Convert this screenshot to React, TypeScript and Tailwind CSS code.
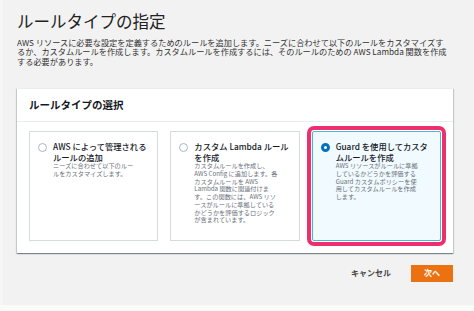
import React from "react";

type CardProps = {
  title: string[];
  desc: string[];
  selected?: boolean;
};

function Card({ title, desc, selected }: CardProps) {
  return (
    <div
      className={
        selected
          ? "flex gap-[6px] pl-[8px] pt-[9px] border border-[#44b9d6] bg-[#f1faff] rounded-[2px] outline-4 outline-solid outline-[#ee2f6d] outline-offset-[1px]"
          : "flex gap-[6px] pl-[8px] pt-[9px] border border-[#d5dbdb] bg-white"
      }
    >
      <div className="pt-[2px] shrink-0">
        {selected ? (
          <div className="w-[9px] h-[9px] rounded-full border-[3px] border-[#0073bb] bg-white" />
        ) : (
          <div className="w-[9px] h-[9px] rounded-full border border-[#aab7b8] bg-white" />
        )}
      </div>
      <div className="flex flex-col">
        <div className="text-[8.3px] leading-[10.7px] font-medium text-[#16191f]">
          {title.map((t) => (
            <div key={t} className="whitespace-nowrap">
              {t}
            </div>
          ))}
        </div>
        <div className="text-[6.2px] leading-[7.7px] text-[#687078]">
          {desc.map((t) => (
            <div key={t} className="whitespace-nowrap">
              {t}
            </div>
          ))}
        </div>
      </div>
    </div>
  );
}

export default function App() {
  return (
    <div className="w-[474px] h-[311px] overflow-hidden flex flex-col bg-[#fafafa] font-['Noto_Sans_CJK_JP','Open_Sans',sans-serif]">
      <div className="h-[305px] bg-[#f2f2f2] border-l-[3px] border-l-[#f6f6f6] pl-[14px] pt-[10px] flex flex-col">
        <h1 className="text-[16.5px] leading-[22px] font-normal text-[#222] whitespace-nowrap">
          ルールタイプの指定
        </h1>
        <div className="mt-[6px] text-[8.2px] leading-[9.3px] text-[#333]">
          <div className="whitespace-nowrap">
            AWS リソースに必要な設定を定義するためのルールを追加します。ニーズに合わせて以下のルールをカスタマイズす
          </div>
          <div className="whitespace-nowrap">
            るか、カスタムルールを作成します。カスタムルールを作成するには、そのルールのための AWS Lambda 関数を作成
          </div>
          <div className="whitespace-nowrap">する必要があります。</div>
        </div>

        <div className="mt-[22px] w-[436px] bg-white border-t border-t-[#eaeded] shadow-[0_1px_1px_0_rgba(0,28,36,0.3),1px_1px_1px_0_rgba(0,28,36,0.15),-1px_1px_1px_0_rgba(0,28,36,0.15)]">
          <div className="h-[33px] flex items-center px-[12px] border-b border-[#eaeded]">
            <span className="text-[10.5px] font-bold text-[#16191f]">ルールタイプの選択</span>
          </div>
          <div className="grid grid-cols-3 gap-[12px] px-[12px] pt-[9px] pb-[12px]">
            <div className="h-[110px] flex flex-col [&>div]:flex-1">
              <Card
                title={["AWS によって管理される", "ルールの追加"]}
                desc={["ニーズに合わせて以下のルー", "ルをカスタマイズします。"]}
              />
            </div>
            <div className="h-[110px] flex flex-col [&>div]:flex-1">
              <Card
                title={["カスタム Lambda ルール", "を作成"]}
                desc={[
                  "カスタムルールを作成し、",
                  "AWS Config に追加します。各",
                  "カスタムルールを AWS",
                  "Lambda 関数に関連付けま",
                  "す。この関数には、AWS リソ",
                  "ースがルールに準拠している",
                  "かどうかを評価するロジック",
                  "が含まれています。",
                ]}
              />
            </div>
            <div className="h-[110px] flex flex-col [&>div]:flex-1">
              <Card
                selected
                title={["Guard を使用してカスタ", "ムルールを作成"]}
                desc={[
                  "AWS リソースがルールに準拠",
                  "しているかどうかを評価する",
                  "Guard カスタムポリシーを使",
                  "用してカスタムルールを作成",
                  "します。",
                ]}
              />
            </div>
          </div>
        </div>

        <div className="mt-[12px] w-[436px] flex justify-end items-center gap-[20px]">
          <span className="text-[8px] font-bold text-[#444]">キャンセル</span>
          <div className="w-[42px] h-[17px] bg-[#ec7211] flex items-center justify-center">
            <span className="text-[8px] font-bold text-white">次へ</span>
          </div>
        </div>
      </div>
      <div className="h-[6px]" />
    </div>
  );
}
